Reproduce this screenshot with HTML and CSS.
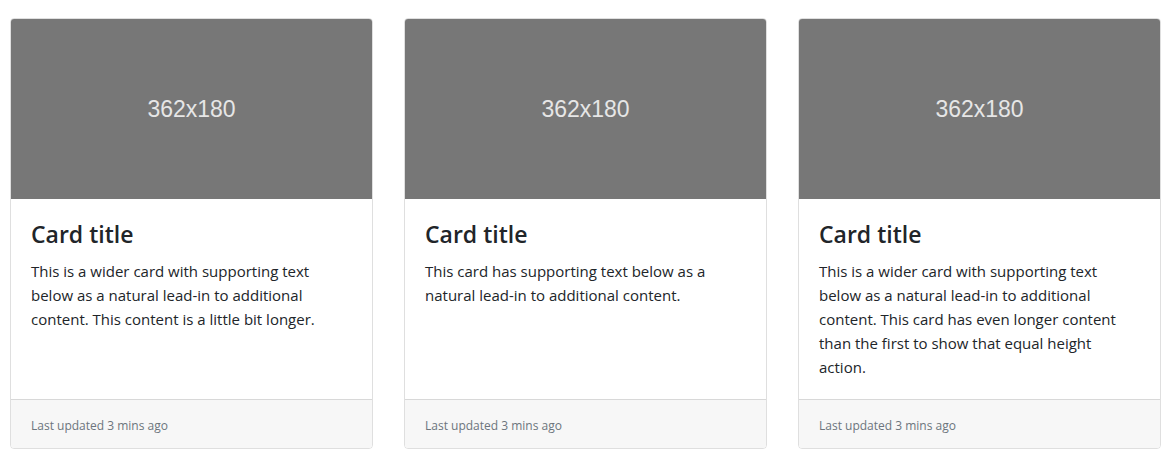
FILE: index.html
```html
<!DOCTYPE html>
<html>
<head>
<meta charset="utf-8">
<link rel="stylesheet" href="styles.css">
</head>
<body>
<div class="deck">
  <div class="card">
    <div class="img"><span>362x180</span></div>
    <div class="body">
      <h4 class="title">Card title</h4>
      <p class="text">This is a wider card with supporting text below as a natural lead-in to additional content. This content is a little bit longer.</p>
    </div>
    <div class="footer"><small>Last updated 3 mins ago</small></div>
  </div>
  <div class="card">
    <div class="img"><span>362x180</span></div>
    <div class="body">
      <h4 class="title">Card title</h4>
      <p class="text">This card has supporting text below as a natural lead-in to additional content.</p>
    </div>
    <div class="footer"><small>Last updated 3 mins ago</small></div>
  </div>
  <div class="card">
    <div class="img"><span>362x180</span></div>
    <div class="body">
      <h4 class="title">Card title</h4>
      <p class="text">This is a wider card with supporting text below as a natural lead-in to additional content. This card has even longer content than the first to show that equal height action.</p>
    </div>
    <div class="footer"><small>Last updated 3 mins ago</small></div>
  </div>
</div>
</body>
</html>
```
FILE: styles.css
```css
html, body {
  margin: 0;
  padding: 0;
  background: #fff;
}
body {
  font-family: "Open Sans", "Noto Sans", sans-serif;
  font-size: 15px;
  line-height: 24px;
  color: #212529;
}
.deck {
  display: flex;
  gap: 31px;
  padding: 18px 15px 0 10px;
}
.card {
  flex: 1 1 0;
  display: flex;
  flex-direction: column;
  border: 1px solid rgba(0,0,0,.125);
  border-radius: 4px;
  overflow: hidden;
}
.img {
  height: 180px;
  background: #777;
  display: flex;
  align-items: center;
  justify-content: center;
  color: #e6e6e6;
  font-family: "Liberation Sans", Arial, sans-serif;
  font-size: 23px;
}
.body {
  flex: 1 1 auto;
  padding: 20px;
}
.title {
  margin: 0 0 10px;
  font-size: 23px;
  font-weight: 600;
  line-height: 30px;
  color: #212529;
}
.text {
  margin: 0;
}
.footer {
  padding: 14px 20px 10px;
  background: #f7f7f7;
  border-top: 1px solid rgba(0,0,0,.125);
  font-size: 12px;
  line-height: 24px;
}
.footer small {
  font-size: 12px;
  color: #6c757d;
}
```
